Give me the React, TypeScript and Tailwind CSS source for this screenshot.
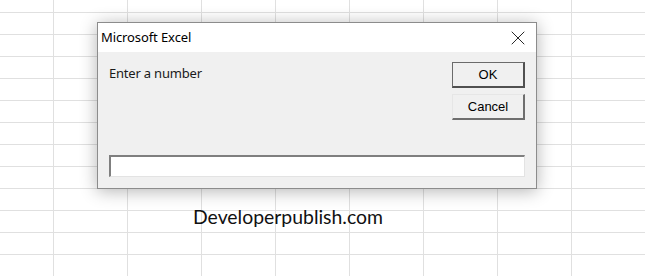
import { X } from "lucide-react"

const COLS = 10
const ROWS = 13

function SheetGrid() {
  const cells = Array.from({ length: COLS * ROWS }, (_, i) => i)
  return (
    <div className="grid grid-cols-[54px_repeat(9,74px)] grid-rows-[13px_repeat(12,22px)]">
      {cells.map((i) => (
        <div key={`cell_${i}`} className="border-r border-b border-[#e0e0e0]" />
      ))}
    </div>
  )
}

function InputBox() {
  return (
    <div className="w-[440px] h-[167px] flex flex-col border border-[#8c8c8c] bg-[#f0f0f0] shadow-[0_2px_16px_rgba(0,0,0,0.3)] font-['Liberation_Sans',Arial,sans-serif] text-black">
      <div className="h-[29px] bg-white flex items-center justify-between pl-[3px] pr-[6px]">
        <span className="text-[13px] font-['Noto_Sans',sans-serif] tracking-[-0.1px]">Microsoft Excel</span>
        <X size={24} strokeWidth={0.9} className="text-[#111]" />
      </div>

      <div className="flex-1 flex flex-col pl-[11px] pr-[11px] pb-[11px] pt-[10px]">
        <div className="flex items-start justify-between">
          <span className="mt-[2px] text-[13px] font-['Noto_Sans',sans-serif] text-[#1a1a1a] tracking-[-0.2px]">Enter a number</span>
          <div className="flex flex-col gap-[6px]">
            <button className="w-[73px] h-[26px] border border-[#6b6b6b] border-b-2 border-r-2 border-b-[#505050] border-r-[#505050] bg-[#f0f0f0] text-[13px] text-black">
              OK
            </button>
            <button className="w-[73px] h-[26px] border border-t-[#e6e6e6] border-l-[#e6e6e6] border-b-2 border-r-2 border-b-[#6e6e6e] border-r-[#6e6e6e] bg-[#f0f0f0] text-[13px] text-black">
              Cancel
            </button>
          </div>
        </div>

        <input
          className="mt-auto w-[416px] h-[22px] bg-white border-t-2 border-l-2 border-b border-r border-t-[#7f7f7f] border-l-[#7f7f7f] border-b-[#e3e3e3] border-r-[#e3e3e3] outline-none"
          type="text"
        />
      </div>
    </div>
  )
}

export default function App() {
  return (
    <div className="relative w-[645px] h-[276px] overflow-hidden bg-white">
      <SheetGrid />

      <div className="absolute left-[97px] top-[22px]">
        <InputBox />
      </div>

      <div className="absolute left-[193px] top-[202px] text-[19.4px] text-[#111] font-['Lato',sans-serif]">
        Developerpublish.com
      </div>
    </div>
  )
}
